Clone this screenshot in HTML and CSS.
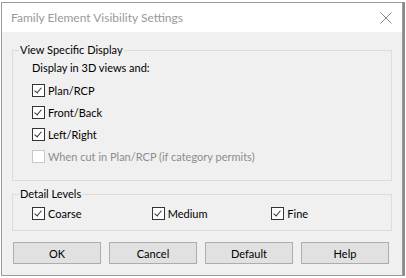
FILE: index.html
```html
<!DOCTYPE html>
<html lang="en">
<head>
  <meta charset="UTF-8" />
  <title>Family Element Visibility Settings</title>
  <link rel="stylesheet" href="styles.css">
</head>
<body>
  <div class="window">
    <div class="titlebar">
      <span class="title">Family Element Visibility Settings</span>
      <svg class="close" width="12" height="12" viewBox="0 0 12 12">
        <path d="M0.5 0.5 L11.5 11.5 M11.5 0.5 L0.5 11.5" stroke="#8a8a8a" stroke-width="1" fill="none"/>
      </svg>
    </div>

    <div class="content">
      <fieldset class="group">
        <legend>View Specific Display</legend>
        <div class="caption">Display in 3D views and:</div>
        <div class="check-row"><span class="box checked"></span>Plan/RCP</div>
        <div class="check-row"><span class="box checked"></span>Front/Back</div>
        <div class="check-row"><span class="box checked"></span>Left/Right</div>
        <div class="check-row disabled"><span class="box"></span>When cut in Plan/RCP (if category permits)</div>
      </fieldset>

      <fieldset class="group detail">
        <legend>Detail Levels</legend>
        <div class="levels">
          <div class="check-row"><span class="box checked"></span>Coarse</div>
          <div class="check-row"><span class="box checked"></span>Medium</div>
          <div class="check-row"><span class="box checked"></span>Fine</div>
        </div>
      </fieldset>

      <div class="buttons">
        <button>OK</button>
        <button>Cancel</button>
        <button>Default</button>
        <button>Help</button>
      </div>
    </div>
  </div>
</body>
</html>
```

FILE: styles.css
```css
body {
  margin: 0;
  background: #fff;
  font-family: Lato, sans-serif;
  font-size: 11px;
  color: #000;
}

.window {
  margin: 2px 0 0 1px;
  width: 400px;
  height: 272px;
  border: 1px solid #9a9a9a;
  box-shadow: 2px 0 0 #8a8a8a;
  display: flex;
  flex-direction: column;
}

.titlebar {
  height: 29px;
  background: #fff;
  display: flex;
  align-items: center;
  justify-content: space-between;
  padding: 0 10px 0 9px;
}

.title {
  color: #999;
  font-size: 12px;
}

.content {
  flex: 1;
  background: #f0f0f0;
  padding: 10px 10px 0 10px;
}

.group {
  margin: 0;
  padding: 0 0 13px 19px;
  border: 1px solid #dcdcdc;
  min-width: 0;
}

.group legend {
  padding: 0 1px;
  margin-left: -13px;
  line-height: 16px;
}

.caption {
  line-height: 16px;
  margin-top: 2px;
  margin-bottom: 3px;
}

.check-row {
  display: flex;
  align-items: center;
  height: 22px;
}

.disabled {
  color: #8d8d8d;
}

.box {
  width: 11px;
  height: 11px;
  border: 1px solid #333;
  background: #fff;
  margin-right: 3px;
  position: relative;
}

.disabled .box {
  border-color: #c8c8c8;
}

.box.checked::after {
  content: "";
  position: absolute;
  left: 3px;
  top: 1px;
  width: 3px;
  height: 6px;
  border: solid #333;
  border-width: 0 1px 1px 0;
  transform: rotate(40deg);
}

.detail {
  margin-top: 5px;
  padding-bottom: 6px;
}

.levels {
  display: flex;
}

.levels .check-row {
  width: 120px;
}

.buttons {
  display: flex;
  gap: 8px;
  margin-top: 11px;
  padding-left: 1px;
}

button {
  width: 88px;
  height: 22px;
  padding: 0;
  font-family: Lato, sans-serif;
  font-size: 11px;
  color: #000;
  background: #e1e1e1;
  border: 1px solid #adadad;
  border-radius: 0;
}
```
